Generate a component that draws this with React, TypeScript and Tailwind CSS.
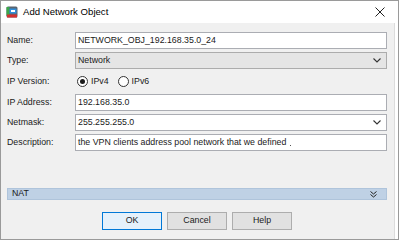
import React from 'react';

const font = { fontFamily: '"Liberation Sans", Arial, sans-serif' };

const Chevron = () => (
  <svg width="8" height="5" viewBox="0 0 8 5" className="shrink-0">
    <path d="M0.5 0.5 L4 4 L7.5 0.5" fill="none" stroke="#333" strokeWidth="1.1" />
  </svg>
);

const Row = ({ label, children, h = 'h-[17px]' }: { label: string; children: React.ReactNode; h?: string }) => (
  <div className={`flex items-center ${h}`}>
    <div className="w-[68px] shrink-0 text-[8.8px] text-[#1a1a1a]">{label}</div>
    <div className="flex-1 h-full flex items-center">{children}</div>
  </div>
);

const Radio = ({ checked, label }: { checked?: boolean; label: string }) => (
  <div className="flex items-center gap-[3px]">
    <div className="w-[11px] h-[11px] rounded-full border border-[#333] bg-white flex items-center justify-center">
      {checked && <div className="w-[5px] h-[5px] rounded-full bg-[#1a1a1a]" />}
    </div>
    <span className="text-[8.8px] text-[#1a1a1a]">{label}</span>
  </div>
);

export default function App() {
  return (
    <div style={font} className="w-[399px] h-[240px] border border-[#9a9a9a] bg-white flex flex-col">
      {/* title bar */}
      <div className="h-[22px] flex items-center bg-white shrink-0">
        <svg width="12" height="12" viewBox="0 0 12 12" className="ml-[5px] mr-[5px]">
          <rect x="0.5" y="0.5" width="11" height="11" rx="1.5" fill="#5a6470" />
          <rect x="0.5" y="1" width="3" height="9" fill="#3aa84a" />
          <rect x="1" y="8.5" width="10" height="3" fill="#d43030" />
          <rect x="3.5" y="2.5" width="7" height="5" rx="0.5" fill="#2f8fdc" />
          <rect x="5" y="4" width="4" height="2" fill="#ffffff" />
        </svg>
        <span className="text-[9.6px] text-black">Add Network Object</span>
        <svg width="10" height="10" viewBox="0 0 10 10" className="ml-auto mr-[13px]">
          <path d="M0.5 0.5 L9.5 9.5 M9.5 0.5 L0.5 9.5" stroke="#222" strokeWidth="1" />
        </svg>
      </div>

      {/* body */}
      <div className="flex-1 flex bg-white pr-[3px]">
        <div className="flex-1 bg-[#f0f0f0] border-r border-[#dcdcdc] flex flex-col pl-[6px] pr-[7px] pt-[9px]">
          <div className="flex flex-col gap-[3px]">
            <Row label="Name:">
              <div className="w-full h-full bg-white border border-[#abadb3] px-[2px] flex items-center text-[8.8px] text-[#1a1a1a]">
                NETWORK_OBJ_192.168.35.0_24
              </div>
            </Row>
            <Row label="Type:">
              <div className="w-full h-full bg-[#e5e5e5] border border-[#acacac] px-[2px] flex items-center text-[8.8px] text-[#1a1a1a]">
                <span className="flex-1">Network</span>
                <span className="mr-[3px]"><Chevron /></span>
              </div>
            </Row>
            <Row label="IP Version:" h="h-[19px]">
              <div className="flex items-center gap-[9px] pl-[2px]">
                <Radio checked label="IPv4" />
                <Radio label="IPv6" />
              </div>
            </Row>
            <Row label="IP Address:">
              <div className="w-full h-full bg-white border border-[#abadb3] px-[2px] flex items-center text-[8.8px] text-[#1a1a1a]">
                192.168.35.0
              </div>
            </Row>
            <Row label="Netmask:">
              <div className="w-full h-full bg-white border border-[#abadb3] px-[2px] flex items-center text-[8.8px] text-[#1a1a1a]">
                <span className="flex-1">255.255.255.0</span>
                <span className="mr-[3px]"><Chevron /></span>
              </div>
            </Row>
            <Row label="Description:">
              <div className="w-full h-full bg-white border border-[#abadb3] px-[2px] flex items-center text-[8.8px] text-[#1a1a1a]">
                the VPN clients address pool network that we defined
                <span className="ml-[4px] mt-[6px] w-[1px] h-[1px] bg-[#555]" />
              </div>
            </Row>
          </div>

          {/* NAT bar */}
          <div className="mt-[37px] h-[12px] bg-[#bfd1e5] border border-[#afc4db] flex items-center px-[4px] text-[8.8px] text-[#1a1a1a]">
            <span className="flex-1">NAT</span>
            <svg width="7" height="7" viewBox="0 0 7 7" className="mr-[5px]">
              <path d="M0.5 0.5 L3.5 3 L6.5 0.5 M0.5 3.5 L3.5 6 L6.5 3.5" fill="none" stroke="#222" strokeWidth="1" />
            </svg>
          </div>

          {/* buttons */}
          <div className="mt-[12px] flex justify-center gap-[5px]">
            <button className="w-[60px] h-[18px] bg-[#e5f1fb] border border-[#0078d7] text-[8.8px] text-[#1a1a1a]">OK</button>
            <button className="w-[60px] h-[18px] bg-[#e1e1e1] border border-[#adadad] text-[8.8px] text-[#1a1a1a]">Cancel</button>
            <button className="w-[60px] h-[18px] bg-[#e1e1e1] border border-[#adadad] text-[8.8px] text-[#1a1a1a]">Help</button>
          </div>
        </div>
      </div>
    </div>
  );
}
